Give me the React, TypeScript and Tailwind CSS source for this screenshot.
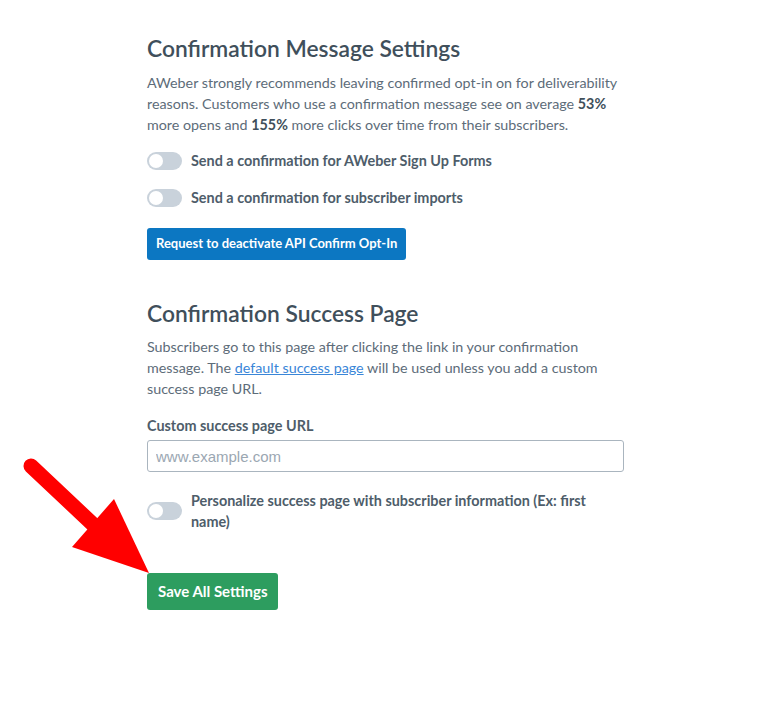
import React from "react";

function Toggle() {
  return (
    <span className="relative inline-block h-[18px] w-[35px] shrink-0 rounded-full bg-[#c9d2db]">
      <span className="absolute left-[2px] top-[2px] h-[14px] w-[14px] rounded-full bg-white" />
    </span>
  );
}

function Arrow() {
  return (
    <svg className="absolute left-0 top-[440px]" width="170" height="150" viewBox="0 440 170 150">
      <line x1="31" y1="466" x2="100" y2="531" stroke="#ff0000" strokeWidth="15" strokeLinecap="round" />
      <polygon points="114,499 72,547 149,573" fill="#ff0000" />
    </svg>
  );
}

export default function App() {
  return (
    <div className="relative min-h-[701px] bg-white font-['Lato',sans-serif] text-[#5d6c79]">
      <div className="w-[624px] pl-[147px] pt-[34px]">
        <h2 className="text-[22.8px] leading-[28px] font-semibold text-[#404f5b]">Confirmation Message Settings</h2>
        <p className="mt-[10px] text-[14.3px] leading-[21px]">
          AWeber strongly recommends leaving confirmed opt-in on for deliverability reasons. Customers who use a
          confirmation message see on average <b className="font-bold text-[#404f5b]">53%</b> more opens and{" "}
          <b className="font-bold text-[#404f5b]">155%</b> more clicks over time from their subscribers.
        </p>
        <div className="mt-[15px] flex flex-col gap-[15px]">
          <label className="flex h-[22px] items-center gap-[9px] text-[14.4px] font-bold text-[#4e5d6a]">
            <Toggle />
            Send a confirmation for AWeber Sign Up Forms
          </label>
          <label className="flex h-[22px] items-center gap-[9px] text-[14.4px] font-bold text-[#4e5d6a]">
            <Toggle />
            Send a confirmation for subscriber imports
          </label>
        </div>
        <button className="mt-[19px] h-[32px] rounded-[3px] bg-[#0c77c2] px-[9px] text-[13px] font-bold text-white">
          Request to deactivate API Confirm Opt-In
        </button>

        <h2 className="mt-[39px] text-[22.8px] leading-[28px] font-semibold text-[#404f5b]">Confirmation Success Page</h2>
        <p className="mt-[9px] text-[14.3px] leading-[21px]">
          Subscribers go to this page after clicking the link in your confirmation message. The{" "}
          <a href="#" className="text-[#3a86d8] underline">default success page</a> will be used unless you add a custom
          success page URL.
        </p>
        <div className="mt-[17px] text-[14.4px] leading-[20px] font-bold text-[#4e5d6a]">Custom success page URL</div>
        <input
          className="mt-[4px] h-[32px] w-full rounded-[3px] border border-[#aab5bf] px-[8px] font-['Liberation_Sans',sans-serif] text-[15px] text-[#404f5b] placeholder:text-[#9ba7b2] outline-none"
          placeholder="www.example.com"
        />
        <label className="mt-[18px] flex items-center gap-[9px] text-[14.4px] leading-[21px] font-bold text-[#4e5d6a]">
          <Toggle />
          <span className="max-w-[410px]">Personalize success page with subscriber information (Ex: first name)</span>
        </label>
        <button className="mt-[41px] h-[37px] rounded-[3px] bg-[#2d9d5f] px-[11px] text-[15px] font-bold text-white">
          Save All Settings
        </button>
      </div>
      <Arrow />
    </div>
  );
}
